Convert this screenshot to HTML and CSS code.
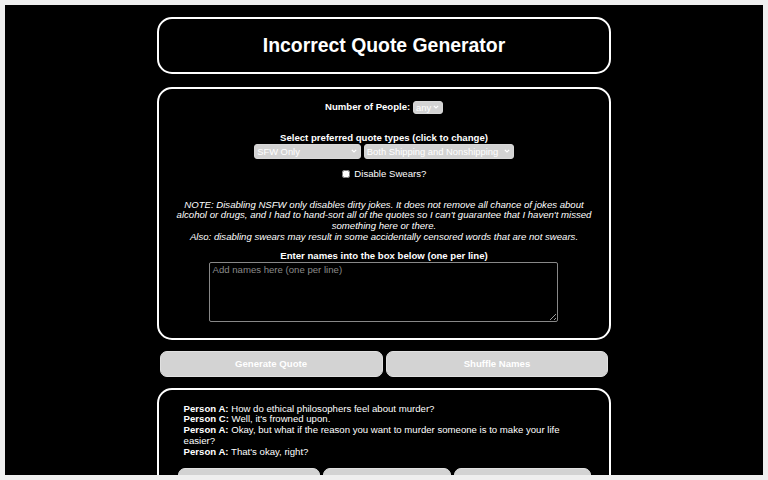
FILE: index.html
```html
<!DOCTYPE html>
<html lang="en">
<head>
    <meta charset="UTF-8">
    <meta name="viewport" content="width=device-width, initial-scale=1.0">
    <title>Incorrect Quote Generator</title>
    <link rel="stylesheet" href="styles.css">
</head>
<body>
    <div class="frame"></div>
    <div class="container">
        <div class="box title-box">
            <h1>Incorrect Quote Generator</h1>
        </div>

        <div class="box settings">
            <div class="row people">
                <label for="peopleCount">Number of People:</label>
                <select id="peopleCount" class="pick">
                    <option>any</option>
                    <option>1</option>
                    <option>2</option>
                    <option>3</option>
                    <option>4</option>
                    <option>5</option>
                    <option>6</option>
                </select>
            </div>

            <div class="row heading">Select preferred quote types (click to change)</div>
            <div class="row types">
                <select id="nsfwType" class="pick nsfw-pick">
                    <option>SFW Only</option>
                    <option>NSFW Only</option>
                    <option>Both SFW and NSFW</option>
                </select>
                <select id="shipType" class="pick ship-pick">
                    <option>Both Shipping and Nonshipping</option>
                    <option>Shipping Only</option>
                    <option>Nonshipping Only</option>
                </select>
            </div>

            <div class="row swears">
                <label><input type="checkbox" id="noSwears" class="check"> Disable Swears?</label>
            </div>

            <p class="note">
                NOTE: Disabling NSFW only disables dirty jokes. It does not remove all chance of jokes about alcohol or drugs, and I had to hand-sort all of the quotes so I can't guarantee that I haven't missed something here or there.<br>
                Also: disabling swears may result in some accidentally censored words that are not swears.
            </p>

            <div class="row heading names-heading">Enter names into the box below (one per line)</div>
            <textarea id="names" class="names" placeholder="Add names here (one per line)"></textarea>
        </div>

        <div class="actions">
            <button type="button" class="btn" onclick="generateQuote()">Generate Quote</button>
            <button type="button" class="btn" onclick="shuffleNames()">Shuffle Names</button>
        </div>

        <div class="box quote-box">
            <div id="quote" class="quote">
                <div><b>Person A:</b> How do ethical philosophers feel about murder?</div>
                <div><b>Person C:</b> Well, it's frowned upon.</div>
                <div><b>Person A:</b> Okay, but what if the reason you want to murder someone is to make your life easier?</div>
                <div><b>Person A:</b> That's okay, right?</div>
            </div>
            <div class="quote-actions">
                <button type="button" class="btn small wide">Copy Quote to Clipboard</button>
                <button type="button" class="btn small">Save Quote</button>
                <button type="button" class="btn small mid">View Saved Quotes</button>
            </div>
        </div>
    </div>

    <script>
        // Shuffle the names typed into the box
        function shuffleNames() {
            const box = document.getElementById('names');
            const names = box.value.split('\n').filter(function(n) { return n.trim(); });
            for (let i = names.length - 1; i > 0; i--) {
                const j = Math.floor(Math.random() * (i + 1));
                const t = names[i];
                names[i] = names[j];
                names[j] = t;
            }
            box.value = names.join('\n');
        }

        function generateQuote() {
        }
    </script>
</body>
</html>
```

FILE: styles.css
```css
html {
    background-color: #000;
}
body {
    font-family: "Liberation Sans", Arial, sans-serif;
    font-size: 9.6px;
    line-height: 10.8px;
    color: #fff;
    background-color: #000;
    margin: 0;
    padding: 5px;
}
.frame {
    position: fixed;
    top: 0;
    left: 0;
    right: 0;
    bottom: 0;
    border: 5px solid #efefef;
    pointer-events: none;
    z-index: 10;
}
.container {
    width: 60%;
    margin: 0 auto;
}
.box {
    border: 2px solid #fff;
    border-radius: 15px;
    margin-top: 12px;
}
.title-box {
    text-align: center;
    padding: 15px 0 16px;
}
h1 {
    font-size: 19.4px;
    line-height: 22px;
    margin: 0;
}

/* settings panel */
.settings {
    text-align: center;
    padding: 10px 14px 16px;
    margin-top: 13px;
}
.row {
    display: block;
}
.people {
    font-weight: bold;
    height: 15px;
    line-height: 15px;
}
.heading {
    font-weight: bold;
    margin-top: 19px;
}
.types {
    height: 15px;
}
.swears {
    margin-top: 10px;
}
.pick {
    -webkit-appearance: none;
    appearance: none;
    font-family: "Liberation Sans", Arial, sans-serif;
    font-size: 9.4px;
    color: #fff;
    background-color: #d3d3d3;
    background-image: url("data:image/svg+xml,%3Csvg xmlns='http://www.w3.org/2000/svg' width='6' height='4' viewBox='0 0 6 4'%3E%3Cpath d='M0.8 0.8 L3 3 L5.2 0.8' fill='none' stroke='%23fff' stroke-width='1.2'/%3E%3C/svg%3E");
    background-repeat: no-repeat;
    background-position: right 3px center;
    border: 1px solid #d8d8d8;
    border-radius: 3px;
    height: 13px;
    padding: 0 10px 0 2px;
    vertical-align: middle;
}
.types .pick {
    height: 15px;
}
.nsfw-pick {
    width: 107px;
}
.ship-pick {
    width: 150px;
}
.check {
    width: 8px;
    height: 8px;
    margin: 0 2px 0 0;
    vertical-align: -1px;
}
.note {
    font-style: italic;
    margin: 20px 0 0;
}
.names-heading {
    margin-top: 8px;
}
.names {
    display: block;
    box-sizing: border-box;
    width: 349px;
    height: 60px;
    margin: 0 auto;
    padding: 1px 2px;
    background-color: #000;
    color: #fff;
    border: 1px solid #888;
    border-radius: 2px;
    font-family: "Liberation Sans", Arial, sans-serif;
    font-size: 9.6px;
}
.names::placeholder {
    color: #8a8a8a;
}

/* buttons */
.actions {
    display: flex;
    gap: 3px;
    margin: 11px 3px 0;
}
.btn {
    flex: 1;
    height: 26px;
    background-color: #d3d3d3;
    color: #fff;
    border: 1px solid #e0e0e0;
    border-radius: 7px;
    font-family: "Liberation Sans", Arial, sans-serif;
    font-size: 9.6px;
    font-weight: bold;
    cursor: pointer;
}
.btn:hover {
    background-color: #c4c4c4;
}

/* quote output */
.quote-box {
    margin-top: 11px;
    padding: 14px 25px 20px;
}
.quote {
    text-align: left;
}
.quote-actions {
    display: flex;
    justify-content: center;
    gap: 3px;
    margin-top: 10px;
}
.btn.small {
    flex: none;
    width: 128px;
}
.btn.wide {
    width: 142px;
}
.btn.mid {
    width: 137px;
}
```
